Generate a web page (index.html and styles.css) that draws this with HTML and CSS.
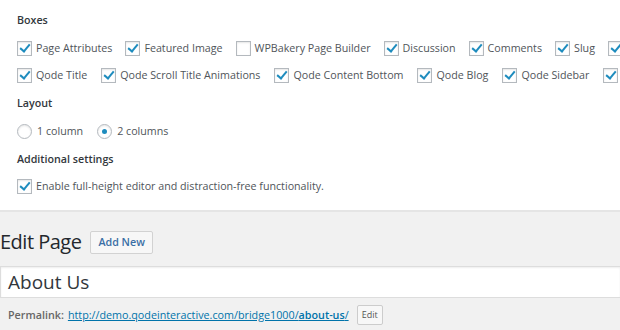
FILE: index.html
```html
<!DOCTYPE html>
<html>
<head>
<meta charset="utf-8">
<link rel="stylesheet" href="styles.css">
</head>
<body>
<div class="screen-options">
  <div class="heading h-boxes">Boxes</div>
  <div class="row r1">
    <label class="item"><span class="cb on"></span>Page Attributes</label>
    <label class="item"><span class="cb on"></span>Featured Image</label>
    <label class="item"><span class="cb"></span>WPBakery Page Builder</label>
    <label class="item"><span class="cb on"></span>Discussion</label>
    <label class="item"><span class="cb on"></span>Comments</label>
    <label class="item"><span class="cb on"></span>Slug</label>
    <label class="item"><span class="cb on"></span></label>
  </div>
  <div class="row r2">
    <label class="item"><span class="cb on"></span>Qode Title</label>
    <label class="item"><span class="cb on"></span>Qode Scroll Title Animations</label>
    <label class="item"><span class="cb on"></span>Qode Content Bottom</label>
    <label class="item"><span class="cb on"></span>Qode Blog</label>
    <label class="item"><span class="cb on"></span>Qode Sidebar</label>
    <label class="item"><span class="cb on"></span></label>
  </div>
  <div class="heading h-layout">Layout</div>
  <div class="row r-radio">
    <label class="item"><span class="radio"></span>1 column</label>
    <label class="item"><span class="radio on"></span>2 columns</label>
  </div>
  <div class="heading h-add">Additional settings</div>
  <div class="row r-add">
    <label class="item"><span class="cb on"></span>Enable full-height editor and distraction-free functionality.</label>
  </div>
</div>
<div class="wrap">
  <div class="title-row">
    <h1 class="page-title">Edit Page</h1>
    <span class="btn-add">Add New</span>
  </div>
  <div class="title-input">About Us</div>
  <div class="permalink">
    <span class="plabel">Permalink:</span>
    <a class="plink" href="#">http://demo.qodeinteractive.com/bridge1000/<b>about-us</b>/</a>
    <span class="btn-edit">Edit</span>
  </div>
</div>
</body>
</html>
```

FILE: styles.css
```css
html, body {
  margin: 0;
  padding: 0;
  background: #f1f1f1;
  overflow: hidden;
  font-family: "Open Sans", "Noto Sans", sans-serif;
  color: #444;
}

.screen-options {
  background: #fff;
  padding: 12px 0 14px 17px;
  border-bottom: 2px solid #e5e5e5;
  white-space: nowrap;
}

.heading {
  font-size: 10.7px;
  font-weight: 600;
  line-height: 16px;
  color: #32373c;
}

.row {
  display: flex;
  align-items: center;
  height: 20px;
  font-size: 10.7px;
  color: #50555a;
}

.r1 { margin-top: 10px; }
.r1 .item { margin-right: 13px; }
.r2 { margin-top: 7px; }
.h-layout { margin-top: 10px; }
.r-radio { margin-top: 10px; }
.h-add { margin-top: 10px; }
.r-add { margin-top: 9px; }

.item {
  display: flex;
  align-items: center;
  margin-right: 14px;
  flex-shrink: 0;
}

.cb {
  width: 13px;
  height: 13px;
  border: 1px solid #b4b9be;
  box-shadow: inset 0 1px 2px rgba(0,0,0,0.1);
  margin-right: 4px;
  position: relative;
  flex-shrink: 0;
  background: #fff;
}

.cb.on::after {
  content: "";
  position: absolute;
  left: 4px;
  top: 0px;
  width: 4px;
  height: 8px;
  border-right: 2px solid #1e8cbe;
  border-bottom: 2px solid #1e8cbe;
  transform: rotate(40deg);
}

.radio {
  width: 13px;
  height: 13px;
  border: 1px solid #b4b9be;
  border-radius: 50%;
  box-shadow: inset 0 1px 2px rgba(0,0,0,0.1);
  margin-right: 5px;
  position: relative;
  flex-shrink: 0;
}

.radio.on::after {
  content: "";
  position: absolute;
  left: 4px;
  top: 4px;
  width: 5px;
  height: 5px;
  border-radius: 50%;
  background: #1e8cbe;
}

.wrap {
  padding-top: 16px;
}

.title-row {
  display: flex;
  align-items: center;
  height: 28px;
}

.page-title {
  margin: 0;
  font-size: 20px;
  letter-spacing: -0.5px;
  font-weight: 400;
  color: #23282d;
  line-height: 28px;
}

.btn-add {
  margin-left: 9px;
  height: 21px;
  line-height: 21px;
  padding: 0 7px;
  border: 1px solid #d2d2d2;
  background: #f7f7f7;
  color: #3a6ea5;
  font-size: 10.7px;
  font-weight: 600;
  border-radius: 2px;
}

.title-input {
  margin-top: 10px;
  height: 30px;
  line-height: 30px;
  border: 1px solid #ddd;
  border-right: none;
  background: #fff;
  padding-left: 7px;
  font-size: 19px;
  color: #32373c;
  box-shadow: inset 0 1px 2px rgba(0,0,0,0.07);
}

.permalink {
  margin-top: 7px;
  display: flex;
  align-items: center;
  height: 20px;
  padding-left: 8px;
  font-size: 10.75px;
  white-space: nowrap;
}

.plabel {
  font-weight: 600;
  color: #666;
  margin-right: 4px;
}

.plink {
  color: #0073aa;
  text-decoration: underline;
}

.plink b {
  font-weight: 600;
}

.btn-edit {
  margin-left: 8px;
  height: 18px;
  line-height: 18px;
  padding: 0 4px;
  border: 1px solid #ccc;
  background: #f7f7f7;
  border-radius: 2px;
  font-size: 9px;
  color: #555;
}
```
